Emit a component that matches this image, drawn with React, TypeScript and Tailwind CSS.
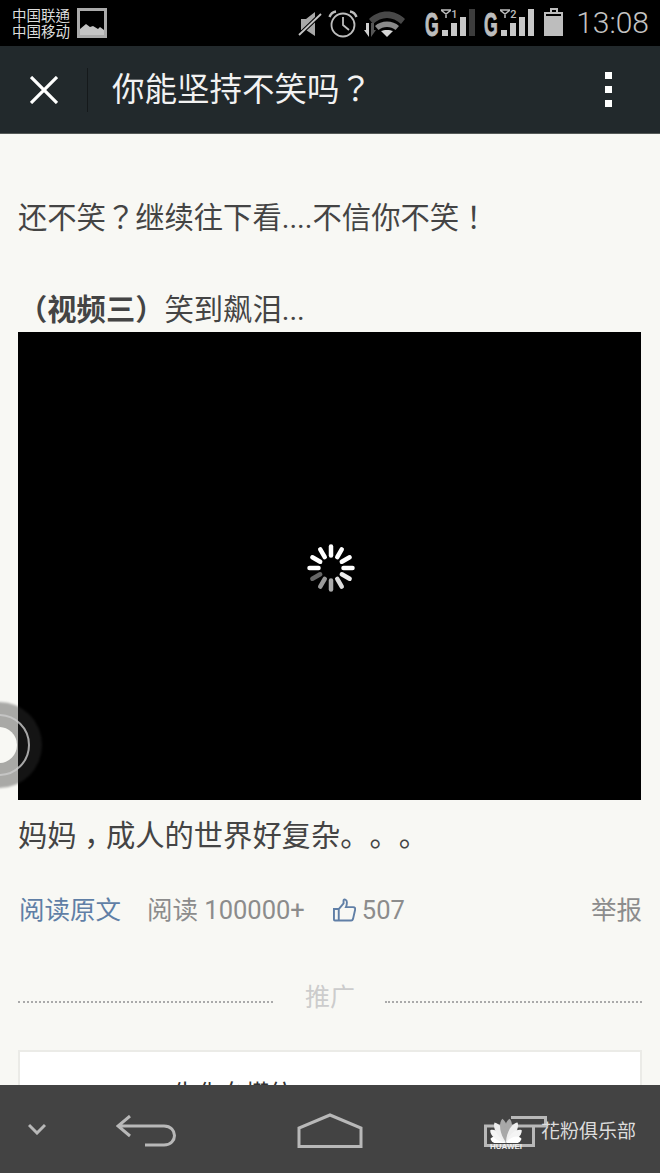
const cjk = "font-['Roboto','Noto_Sans_CJK_TC',sans-serif]";

const spokes = [
  "#ffffff", "#ffffff", "#ffffff", "#ffffff", "#eeeeee", "#dddddd",
  "#aaaaaa", "#999999", "#666666", "#ffffff", "#ffffff", "#ffffff",
];

const Spinner = () => (
  <svg width="48" height="48" viewBox="-24 -24 48 48">
    {spokes.map((color, i) => (
      <line
        key={i}
        x1="0"
        y1="-12.5"
        x2="0"
        y2="-21.5"
        stroke={color}
        strokeWidth="4.5"
        strokeLinecap="round"
        transform={`rotate(${i * 30})`}
      />
    ))}
  </svg>
);

const MuteIcon = () => (
  <svg width="24" height="26" viewBox="0 0 24 26">
    <path d="M3 8h5l9-7v24l-9-6H3z" fill="#a8a8a8" />
    <path d="M1 24 23 3" stroke="#000000" strokeWidth="4" />
    <path d="M1 24 23 3" stroke="#c4c4c4" strokeWidth="1.8" />
  </svg>
);

const AlarmIcon = () => (
  <svg width="30" height="28" viewBox="0 0 30 28" fill="none" stroke="#bdbdbd" strokeWidth="1.8">
    <circle cx="15" cy="15" r="11.5" />
    <path d="M15 7v8l6 5" />
    <path d="M1.500 7C2.500 4 5 2 8 1.500M28.500 7C27.500 4 25 2 22 1.500" strokeWidth="2.4" />
  </svg>
);

const WifiIcon = () => (
  <svg width="42" height="26" viewBox="0 0 42 26">
    <path d="M5 8C15-2 31-2 41 8l-4 5C29 5 17 5 9 13z" fill="#484848" />
    <path d="M11 15c6-6 18-6 24 0l-3.500 4c-4.500-4-12.500-4-17 0z" fill="#8a8a8a" />
    <path d="M17 20c3-1.500 9-1.500 12 0l-6 6z" fill="#d8d8d8" />
    <path d="M0 19h2v-7h3v14z" fill="#d0d0d0" />
    <path d="M7 12h3v7h2l-5 7z" fill="#555555" />
  </svg>
);

const Signal = ({ slot, dim }: { slot: string; dim?: boolean }) => (
  <div className="relative flex items-end h-[28px] w-[49px]">
    <span className="block w-[16px] translate-y-[2px] origin-left scale-x-[0.52] font-['Liberation_Sans',sans-serif] font-bold text-[34px] leading-[28px] text-[#bdbdbd] [-webkit-text-stroke:1px_#bdbdbd]">
      G
    </span>
    <svg className="absolute left-[16px] top-[1px]" width="10" height="9" viewBox="0 0 10 9" fill="none" stroke="#bdbdbd" strokeWidth="1.500">
      <path d="M0 1h10L5 5zM5 4v5" />
    </svg>
    <span className="absolute left-[26px] top-[2px] font-['Roboto',sans-serif] font-medium text-[11px] leading-[10px] text-[#bdbdbd]">
      {slot}
    </span>
    <div className="flex items-end gap-[3px] ml-[1px]">
      <div className="w-[6px] h-[6px] bg-[#c8c8c8]" />
      <div className="w-[6px] h-[13px] bg-[#c8c8c8]" />
      <div className="w-[6px] h-[19px] bg-[#c8c8c8]" />
      <div className={`w-[6px] h-[27px] ${dim ? "bg-[#3c3c3c]" : "bg-[#c8c8c8]"}`} />
    </div>
  </div>
);

const petals = [
  { a: -76, l: 16, c: "#ffffff" },
  { a: -52, l: 20, c: "#f4f4f4" },
  { a: -30, l: 23, c: "#eeeeee" },
  { a: -9, l: 24, c: "#a8a8a8" },
  { a: 9, l: 24, c: "#a8a8a8" },
  { a: 30, l: 23, c: "#eeeeee" },
  { a: 52, l: 20, c: "#f4f4f4" },
  { a: 76, l: 16, c: "#ffffff" },
];

const HuaweiLogo = () => (
  <svg width="34" height="25" viewBox="-17 -24.500 34 25">
    {petals.map((p) => (
      <path
        key={p.a}
        d={`M0 0C-5 ${-p.l * 0.4} -4.500 ${-p.l * 0.85} 0 ${-p.l}C4.500 ${-p.l * 0.85} 5 ${-p.l * 0.4} 0 0z`}
        fill={p.c}
        transform={`rotate(${p.a})`}
      />
    ))}
  </svg>
);

export default function App() {
  return (
    <div className={`relative w-[660px] h-[1173px] flex flex-col overflow-hidden bg-[#f8f8f4] ${cjk}`}>
      {/* status bar */}
      <div className="h-[46px] bg-black flex items-center pl-[12px] pr-[11px] shrink-0">
        <div className="mt-[3px] text-[14.500px] leading-[16px] text-[#dddddd] whitespace-nowrap">
          <div>中国联通</div>
          <div>中国移动</div>
        </div>
        <div className="ml-[7px] w-[30px] h-[30px] border-[3px] border-[#aaaaaa] flex items-end">
          <svg width="24" height="24" viewBox="0 0 24 24">
            <path d="M0 24V18L6 13L10 16L13 15L18 18L20 16L24 19V24Z" fill="#c4c4c4" />
          </svg>
        </div>
        <div className="ml-auto flex items-center">
          <div className="mt-[1px]"><MuteIcon /></div>
          <div className="ml-[6px] mt-[1px]"><AlarmIcon /></div>
          <div className="ml-[6px] mt-[1px]"><WifiIcon /></div>
          <div className="ml-[19px] mb-[2px]"><Signal slot="1" dim /></div>
          <div className="ml-[10px] mb-[2px]"><Signal slot="2" /></div>
          <div className="ml-[11px] mb-[2px] w-[19px] h-[28px] flex flex-col items-center">
            <div className="w-[8px] h-[4px] border-2 border-[#bdbdbd] border-b-0" />
            <div className="w-[19px] h-[24px] border-2 border-[#bdbdbd] flex items-end">
              <div className="w-full h-[18px] bg-[#bdbdbd]" />
            </div>
          </div>
          <span className="ml-[13px] font-['Roboto',sans-serif] font-light text-[30px] leading-[30px] text-[#c4c4c4]">
            13:08
          </span>
        </div>
      </div>

      {/* title bar */}
      <div className="h-[88px] bg-[#22292c] flex items-center shrink-0 border-b border-[#555a58]">
        <div className="w-[88px] h-[44px] flex items-center border-r border-[#15191b]">
          <svg className="ml-[30px]" width="28" height="28" viewBox="0 0 28 28" stroke="#ffffff" strokeWidth="3.200">
            <path d="M1 1l26 26M27 1L1 27" />
          </svg>
        </div>
        <div className="ml-[24px] text-[32.500px] leading-[40px] text-[#f2f2f2] whitespace-nowrap">你能坚持不笑吗？</div>
        <div className="ml-auto mr-[48px] flex flex-col gap-[7px]">
          <div className="w-[7px] h-[7px] bg-white" />
          <div className="w-[7px] h-[7px] bg-white" />
          <div className="w-[7px] h-[7px] bg-white" />
        </div>
      </div>

      {/* article */}
      <div className="flex-1 overflow-hidden px-[18px]">
        <p className="mt-[64px] text-[29.300px] leading-[40px] text-[#444444] whitespace-nowrap">
          还不笑？继续往下看....不信你不笑！
        </p>
        <p className="mt-[52px] text-[29.300px] leading-[40px] text-[#444444] whitespace-nowrap">
          <strong className="font-bold">（视频三）</strong>笑到飙泪...
        </p>
        <div className="mt-[2px] h-[468px] w-[623px] bg-black flex items-center justify-center pt-[4px] pl-[2px]">
          <Spinner />
        </div>
        <p className="mt-[16px] h-[40px] text-[29.300px] leading-[40px] text-[#444444] whitespace-nowrap [text-spacing-trim:space-all]">
          妈妈<span className="inline-block translate-y-[8px]">，</span>成人的世界好复杂
          <span className="font-['Noto_Sans_CJK_SC',sans-serif] leading-[20px]">。。。</span>
        </p>
        <div className="mt-[34px] pl-[1px] flex items-center text-[25.500px] leading-[40px] whitespace-nowrap">
          <span className="text-[#607fa6]">阅读原文</span>
          <span className="ml-[26px] text-[#8c8c8c]">阅读 100000+</span>
          <svg className="ml-[28px]" width="23" height="24" viewBox="0 0 24 24" fill="none" stroke="#607fa6" strokeWidth="2">
            <path d="M1 11h5v12H2a1 1 0 0 1-1-1zM6 11l5-6V2c0-1.500 3.500-1.500 3.500 2 0 2-.5 4-1 5h7.500c2 0 2.500 1.500 2 3l-2 9c-.3 1-1 2-2 2H6" />
          </svg>
          <span className="ml-[6px] text-[#8c8c8c]">507</span>
          <span className="ml-auto text-[#8c8c8c]">举报</span>
        </div>
        <div className="mt-[48px] flex items-center">
          <div className="w-[255px] border-t-2 border-dotted border-[#aaaaaa] mt-[8px]" />
          <span className="ml-[32px] w-[80px] text-[25px] leading-[40px] text-[#cccccc]">推广</span>
          <div className="flex-1 border-t-2 border-dotted border-[#aaaaaa] mt-[8px]" />
        </div>
        <div className="mt-[32px] h-[60px] w-[624px] bg-white border-2 border-[#ebebe7] pl-[153px] pt-[26px] text-[24px] leading-[32px] text-[#333333] whitespace-nowrap">
          生化女模仿
        </div>
      </div>

      {/* nav bar */}
      <div className="relative h-[88px] bg-[#434343] flex items-center pl-[28px] shrink-0">
        <svg width="18" height="12" viewBox="0 0 18 12" fill="none" stroke="#b8b8b8" strokeWidth="3">
          <path d="M1 2l8 8 8-8" />
        </svg>
        <svg className="ml-[70px] mt-[4px]" width="62" height="32" viewBox="0 0 62 32" fill="none" stroke="#b8b8b8" strokeWidth="3">
          <path d="M14 1L2 11l12 10M2 11h46c14 0 14 19 0 19H29" />
        </svg>
        <svg className="ml-[119px] mt-[2px]" width="66" height="35" viewBox="0 0 66 35" fill="none" stroke="#b8b8b8" strokeWidth="3">
          <path d="M2 33.500V15L33 2l31 13v18.500z" />
        </svg>
        <svg className="ml-[121px] mt-[4px]" width="63" height="31" viewBox="0 0 63 31" fill="none" stroke="#b8b8b8" strokeWidth="3">
          <path d="M1.500 10H49.500V29.500H1.500zM27 1.500H61.500V10H50" />
        </svg>
        {/* huawei watermark */}
        <div className="absolute left-[489px] top-[33px] flex flex-col items-center">
          <HuaweiLogo />
          <span className="font-['Liberation_Sans',sans-serif] font-bold text-[8px] leading-[7px] text-[#eeeeee]">HUAWEI</span>
        </div>
        <span className="absolute left-[541px] top-[33px] text-[19px] leading-[28px] text-[#dddddd] whitespace-nowrap">花粉俱乐部</span>
      </div>

      {/* floating ball */}
      <div className="absolute left-[-44px] top-[702px] w-[86px] h-[86px] rounded-full bg-[rgba(50,50,50,0.4)] blur-[1px]" />
      <div className="absolute left-[-32px] top-[714px] w-[62px] h-[62px] rounded-full border-2 border-[#cccccc] opacity-80" />
      <div className="absolute left-[-19px] top-[727px] w-[36px] h-[36px] rounded-full bg-[#f8f8f4]" />
    </div>
  );
}
